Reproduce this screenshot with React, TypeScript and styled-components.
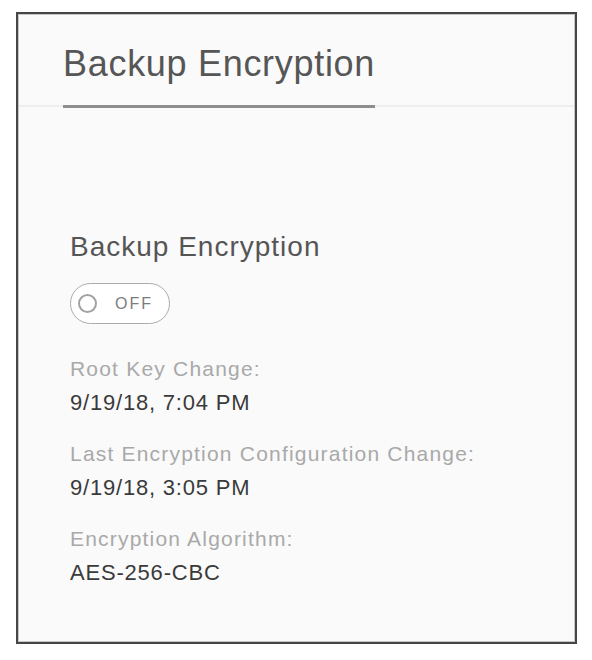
import styled, { createGlobalStyle } from 'styled-components';

const GlobalStyle = createGlobalStyle`
  html, body {
    margin: 0;
    padding: 0;
    background: #ffffff;
  }
  body {
    font-family: "Liberation Sans", Arial, sans-serif;
  }
`;

type Field = { label: string; value: string };

const fields: Field[] = [
	{ label: 'Root Key Change:', value: '9/19/18, 7:04 PM' },
	{ label: 'Last Encryption Configuration Change:', value: '9/19/18, 3:05 PM' },
	{ label: 'Encryption Algorithm:', value: 'AES-256-CBC' },
];

function App() {
	return (
		<>
			<GlobalStyle />
			<Card>
				<Header>
					<Tab>Backup Encryption</Tab>
				</Header>

				<Body>
					<Heading>Backup Encryption</Heading>

					<Toggle type='button' aria-pressed={false}>
						<Knob />
						<ToggleText>OFF</ToggleText>
					</Toggle>

					<Fields>
						{fields.map(f => (
							<FieldItem key={f.label}>
								<Label>{f.label}</Label>
								<Value>{f.value}</Value>
							</FieldItem>
						))}
					</Fields>
				</Body>
			</Card>
		</>
	);
}

export default App;


const Card = styled.div`
  box-sizing: border-box;
  margin: 12px 0 0 16px;
  width: 561px;
  height: 632px;
  background: #fafafa;
  border: 2px solid #464646;
  box-shadow: inset 0 0 0 1px #c6c6c6;
`

const Header = styled.header`
  display: flex;
  align-items: flex-end;
  padding: 30px 0 0 44px;
  margin: 0 1px;
  border-bottom: 2px solid #eeeeee;
`

const Tab = styled.div`
  margin-bottom: -3px;
  padding-bottom: 21px;
  border-bottom: 3px solid #8e8e8e;
  font-size: 36px;
  line-height: 40px;
  letter-spacing: 0.7px;
  color: #565656;
  white-space: nowrap;
`

const Body = styled.main`
  padding: 124px 0 0 52px;
`

const Heading = styled.h2`
  margin: 0;
  font-size: 28px;
  line-height: 32px;
  font-weight: normal;
  letter-spacing: 1px;
  color: #555555;
`

const Toggle = styled.button`
  box-sizing: border-box;
  display: flex;
  align-items: center;
  margin-top: 20px;
  width: 100px;
  height: 41px;
  padding: 0 0 0 7px;
  background: #ffffff;
  border: 1.5px solid #ababab;
  border-radius: 21px;
  font-family: inherit;
  cursor: pointer;
`

const Knob = styled.span`
  box-sizing: border-box;
  width: 19px;
  height: 19px;
  border-radius: 50%;
  border: 2px solid #a2a2a2;
  background: #ffffff;
`

const ToggleText = styled.span`
  margin-left: 18px;
  font-size: 16px;
  letter-spacing: 2px;
  color: #7c7c7c;
`

const Fields = styled.div`
  display: flex;
  flex-direction: column;
  gap: 21px;
  margin-top: 30px;
`

const FieldItem = styled.div`
  display: flex;
  flex-direction: column;
  gap: 4px;
`

const Label = styled.div`
  font-size: 21px;
  line-height: 30px;
  letter-spacing: 1.2px;
  color: #a9a9a9;
`

const Value = styled.div`
  font-size: 22px;
  line-height: 30px;
  letter-spacing: 0.8px;
  color: #3a3a3a;
`
